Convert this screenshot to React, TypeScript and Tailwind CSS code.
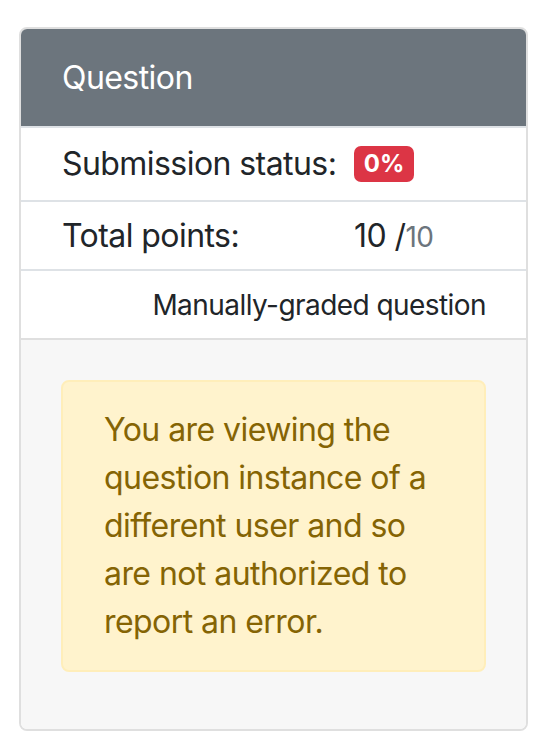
import React from 'react';

const App: React.FC = () => {
  return (
    <div className="min-h-screen bg-white pl-[19px] pt-[27px] font-['Inter','Liberation_Sans',sans-serif] tracking-[-0.035em]">
      <div className="w-[509px] rounded-[8px] border-2 border-[#dfdfdf] overflow-hidden">
        {/* Header */}
        <div className="h-[97px] bg-[#6c757d] flex items-center pl-[41px] text-[32px] text-white">
          Question
        </div>

        {/* Info rows */}
        <div className="border-t-2 border-[#dee2e6] h-[74px] flex items-center text-[32px] text-[#212529]">
          <div className="w-[333px] pl-[41px]">Submission status:</div>
          <span className="w-[60px] h-[36px] rounded-[7px] bg-[#dc3545] text-white text-[24px] font-bold tracking-normal flex items-center justify-center">
            0%
          </span>
        </div>
        <div className="border-t-2 border-[#dee2e6] h-[69px] flex items-center text-[32px] text-[#212529]">
          <div className="w-[333px] pl-[41px]">Total points:</div>
          <div>
            10 /<span className="text-[28px] text-[#6c757d]">10</span>
          </div>
        </div>
        <div className="border-t-2 border-[#dee2e6] h-[69px] flex items-center justify-end pr-[40px] text-[28px] text-[#212529]">
          Manually-graded question
        </div>

        {/* Footer */}
        <div className="border-t-2 border-[#dfdfdf] bg-[#f7f7f7] px-[40px] pt-[40px] pb-[57px]">
          <div className="rounded-[8px] border-2 border-[#ffeeba] bg-[#fff3cd] pt-[24px] pb-[24px] pl-[41px] pr-[40px] text-[32px] leading-[48px] text-[#856404]">
            You are viewing the question instance of a different user and so are not authorized to report an error.
          </div>
        </div>
      </div>
    </div>
  );
};

export default App;
